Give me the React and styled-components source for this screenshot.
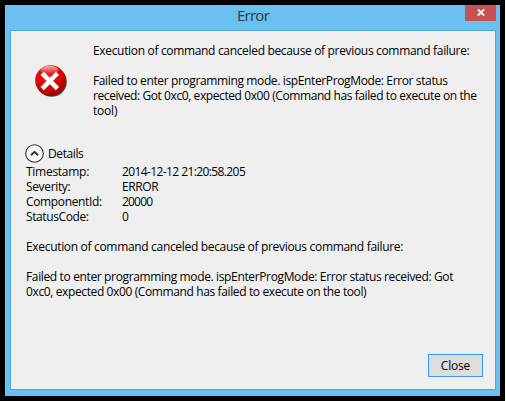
import { useState } from 'react';
import styled, { createGlobalStyle } from 'styled-components';

const GlobalStyle = createGlobalStyle`
  * {
    box-sizing: border-box;
  }
  body {
    margin: 0;
    background-color: #ffffff;
    font-family: "Open Sans", "Noto Sans", sans-serif;
    font-size: 12px;
    line-height: 15px;
    color: #000000;
  }
  p {
    margin: 0;
  }
`;

const Desktop = styled.div`
  width: 505px;
  height: 401px;
  padding: 5px;
  background-color: #000000;
`;

const Window = styled.div`
  width: 495px;
  height: 391px;
  padding: 0 4px 6px 5px;
  display: flex;
  flex-direction: column;
  background-color: #69c0f1;
`;

const TitleBar = styled.div`
  height: 25px;
  display: grid;
  grid-template-columns: 31px 1fr 31px;
  align-items: start;
`;

const Title = styled.h1`
  grid-column: 2;
  margin: 0;
  text-align: center;
  font-size: 15px;
  font-weight: 400;
  line-height: 21px;
  letter-spacing: -0.7px;
  color: #2b3b45;
`;

const CloseX = styled.button`
  width: 31px;
  height: 16px;
  padding: 0 0 2px;
  border: none;
  display: flex;
  align-items: center;
  justify-content: center;
  background-color: #c75050;
`;

const Client = styled.div`
  flex: 1;
  padding: 12px 12px 12px 14px;
  display: flex;
  flex-direction: column;
  border: 1px solid #55a4d3;
  background-color: #efefef;
`;

const Message = styled.div`
  height: 100px;
  display: flex;
  gap: 25px;
  padding-left: 10px;
  svg {
    flex: none;
    margin-top: 22px;
  }
`;

const Line = styled.p`
  min-height: 15px;
  white-space: pre;
  letter-spacing: ${props => props.$track || 0}px;
`;

const Toggle = styled.button`
  width: fit-content;
  height: 20px;
  margin-bottom: 1px;
  padding: 0;
  border: none;
  display: flex;
  align-items: center;
  gap: 4px;
  font: inherit;
  letter-spacing: -0.4px;
  background: none;
  color: inherit;
`;

const Details = styled.div`
  padding-left: 1px;
`;

const Fields = styled.div`
  display: grid;
  grid-template-columns: 96px 1fr;
  margin-bottom: 15px;
`;

const Footer = styled.div`
  margin-top: auto;
  display: flex;
  justify-content: flex-end;
`;

const CloseButton = styled.button`
  width: 55px;
  height: 23px;
  padding: 0 0 1px;
  border: 1px solid #3399ff;
  font: inherit;
  letter-spacing: -0.2px;
  background-color: #dddddd;
  color: #000000;
`;

const ErrorIcon = () => (
  <svg width="33" height="33" viewBox="0 0 33 33">
    <defs>
      <radialGradient id="ball" cx="0.4" cy="0.3" r="0.75">
        <stop offset="0" stopColor="#f01818" />
        <stop offset="0.6" stopColor="#d90606" />
        <stop offset="1" stopColor="#8e0000" />
      </radialGradient>
      <linearGradient id="shine" x1="0" y1="0" x2="0" y2="1">
        <stop offset="0" stopColor="#fff" stopOpacity="0.65" />
        <stop offset="1" stopColor="#fff" stopOpacity="0" />
      </linearGradient>
    </defs>
    <circle cx="16.8" cy="16.8" r="15" fill="#222" opacity="0.8" />
    <circle cx="15.5" cy="15.6" r="15.3" fill="url(#ball)" />
    <ellipse cx="14.5" cy="5.2" rx="9" ry="4.4" fill="url(#shine)" />
    <path d="M8.8 9.9l12 12M20.8 9.9l-12 12" stroke="#fff" strokeWidth="4.6" strokeLinecap="square" />
  </svg>
);

const Chevron = ({ open }) => (
  <svg width="19" height="19" viewBox="0 0 19 19" fill="none">
    <circle cx="9.5" cy="9.5" r="8.8" fill="#f8f8f8" stroke="#333" strokeWidth="1.1" />
    <path d={open ? 'M6 11.2l3.5-3.4 3.5 3.4' : 'M6 7.8l3.5 3.4 3.5-3.4'} stroke="#333" strokeWidth="2" />
  </svg>
);

// name, value, then the letter spacing of each
const fields = [
  ['Timestamp:', '2014-12-12 21:20:58.205', -0.27, -0.6],
  ['Severity:', 'ERROR', -0.35, -0.4],
  ['ComponentId:', '20000', -0.35, -0.8],
  ['StatusCode:', '0', -0.4, 0],
];

const App = () => {
  const [open, setOpen] = useState(true);

  return (
    <>
      <GlobalStyle />
      <Desktop>
        <Window>
          <TitleBar>
            <Title>Error</Title>
            <CloseX aria-label="Close window">
              <svg width="8" height="7" viewBox="0 0 8 7">
                <path d="M0.8 0.3l6.4 6.4M7.2 0.3L0.8 6.7" stroke="#fff" strokeWidth="1.8" />
              </svg>
            </CloseX>
          </TitleBar>
          <Client>
            <Message>
              <ErrorIcon />
              <div>
                <Line $track={-0.33}>Execution of command canceled because of previous command failure:</Line>
                <Line />
                <Line $track={-0.37}>Failed to enter programming mode. ispEnterProgMode: Error status</Line>
                <Line $track={-0.41}>received: Got 0xc0, expected 0x00 (Command has failed to execute on the</Line>
                <Line $track={-0.2}>tool)</Line>
              </div>
            </Message>
            <Toggle onClick={() => setOpen(!open)}>
              <Chevron open={open} />
              Details
            </Toggle>
            {open &&
              <Details>
                <Fields>
                  {fields.map(([name, value, nameTrack, valueTrack]) => [
                    <Line key={name} $track={nameTrack}>{name}</Line>,
                    <Line key={name + 'value'} $track={valueTrack}>{value}</Line>,
                  ])}
                </Fields>
                <Line $track={-0.32}>Execution of command canceled because of previous command failure:</Line>
                <Line />
                <Line $track={-0.36}>Failed to enter programming mode. ispEnterProgMode: Error status received: Got</Line>
                <Line $track={-0.38}>0xc0, expected 0x00 (Command has failed to execute on the tool)</Line>
              </Details>
            }
            <Footer>
              <CloseButton>Close</CloseButton>
            </Footer>
          </Client>
        </Window>
      </Desktop>
    </>
  );
};

export default App;
